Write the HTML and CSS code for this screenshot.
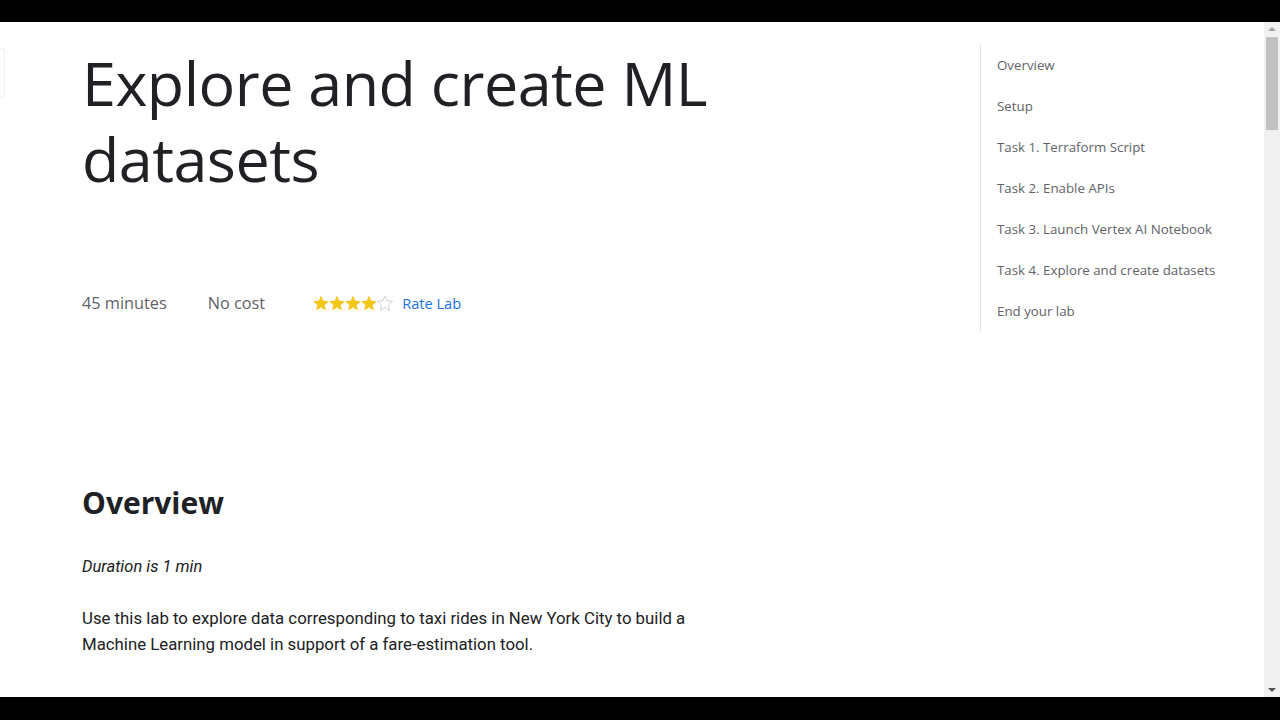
FILE: index.html
```html
<!DOCTYPE html>
<html>
<head>
<meta charset="utf-8">
<link rel="stylesheet" href="styles.css">
</head>
<body>
<div class="letterbox top"></div>
<div class="viewport">
  <div class="page">
    <div class="edge-tab"></div>
    <main class="main">
      <h1 class="title">Explore and create ML datasets</h1>
      <div class="meta">
        <span class="meta-item">45 minutes</span>
        <span class="meta-item">No cost</span>
        <span class="rating">
          <span class="stars">
            <svg class="star" viewBox="2 1.5 20 20"><path d="M12 17.27L18.18 21l-1.64-7.03L22 9.24l-7.19-.61L12 2 9.19 8.63 2 9.240l5.46 4.73L5.82 21z" fill="#f5c518"/></svg>
            <svg class="star" viewBox="2 1.5 20 20"><path d="M12 17.27L18.18 21l-1.64-7.03L22 9.24l-7.19-.61L12 2 9.19 8.63 2 9.24l5.46 4.73L5.82 21z" fill="#f5c518"/></svg>
            <svg class="star" viewBox="2 1.5 20 20"><path d="M12 17.27L18.18 21l-1.64-7.03L22 9.24l-7.19-.61L12 2 9.19 8.63 2 9.24l5.46 4.73L5.82 21z" fill="#f5c518"/></svg>
            <svg class="star" viewBox="2 1.5 20 20"><path d="M12 17.27L18.18 21l-1.64-7.03L22 9.24l-7.19-.61L12 2 9.19 8.63 2 9.24l5.46 4.73L5.82 21z" fill="#f5c518"/></svg>
            <svg class="star" viewBox="1.5 1 21 21"><path d="M12 17.27L18.18 21l-1.64-7.03L22 9.24l-7.19-.61L12 2 9.19 8.63 2 9.24l5.46 4.73L5.82 21z" fill="none" stroke="#cfcfcf" stroke-width="1.3"/></svg>
          </span>
          <a class="rate-link" href="#">Rate Lab</a>
        </span>
      </div>
      <section class="section">
        <h2 class="section-title">Overview</h2>
        <p class="duration">Duration is 1 min</p>
        <p class="body-text">Use this lab to explore data corresponding to taxi rides in New York City to build a Machine Learning model in support of a fare-estimation tool.</p>
      </section>
    </main>
    <aside class="toc">
      <ul class="toc-list">
        <li>Overview</li>
        <li>Setup</li>
        <li>Task 1. Terraform Script</li>
        <li>Task 2. Enable APIs</li>
        <li>Task 3. Launch Vertex AI Notebook</li>
        <li>Task 4. Explore and create datasets</li>
        <li>End your lab</li>
      </ul>
    </aside>
  </div>
  <div class="scrollbar">
    <div class="sb-arrow up"></div>
    <div class="sb-thumb"></div>
    <div class="sb-track"></div>
    <div class="sb-arrow down"></div>
  </div>
</div>
<div class="letterbox bottom"></div>
</body>
</html>
```

FILE: styles.css
```css
html, body {
  margin: 0;
  padding: 0;
  width: 1280px;
  height: 720px;
  overflow: hidden;
  background: #000;
}
.letterbox.top { height: 22px; background: #000; }
.letterbox.bottom { height: 23px; background: #000; }
.viewport {
  height: 675px;
  display: flex;
  background: #fff;
  overflow: hidden;
}
.page {
  flex: 1;
  display: flex;
  position: relative;
}
.edge-tab {
  position: absolute;
  left: 0;
  top: 26px;
  width: 4px;
  height: 48px;
  border: 1px solid #f1f1f1;
  border-left: none;
  border-radius: 0 3px 3px 0;
}
.main {
  width: 980px;
  flex-shrink: 0;
  box-sizing: border-box;
  padding-left: 82px;
}
.title {
  font-family: "Open Sans", sans-serif;
  font-weight: 400;
  font-size: 61px;
  line-height: 76px;
  letter-spacing: -0.5px;
  color: #202124;
  margin: 23px 0 0;
  max-width: 700px;
}
.meta {
  display: flex;
  align-items: center;
  margin-top: 95px;
  font-family: "Open Sans", sans-serif;
  font-size: 16.3px;
  color: #5f6368;
}
.meta-item { margin-right: 41px; }
.rating { display: flex; align-items: center; margin-left: 7px; }
.stars { display: flex; margin-right: 9px; }
.star { width: 16px; height: 16px; }
.rate-link {
  color: #1a73e8;
  text-decoration: none;
  font-size: 14.6px;
  font-weight: 500;
}
.section { margin-top: 169px; }
.section-title {
  font-family: "Open Sans", sans-serif;
  font-weight: 700;
  font-size: 30px;
  line-height: 40px;
  color: #202124;
  margin: 0 0 31px;
}
.duration {
  font-family: Roboto, sans-serif;
  font-style: italic;
  font-size: 16.5px;
  line-height: 26px;
  color: #202124;
  margin: 0 0 25px;
}
.body-text {
  font-family: Roboto, sans-serif;
  font-size: 16.8px;
  line-height: 26px;
  color: #202124;
  margin: 0;
  max-width: 640px;
}
.toc {
  flex: 1;
  padding-top: 23px;
}
.toc-list {
  list-style: none;
  margin: 0;
  padding: 8px 0 8px 16px;
  border-left: 1px solid #e0e0e0;
  font-family: "Open Sans", sans-serif;
  font-size: 13.3px;
  color: #5f6368;
}
.toc-list li {
  height: 41px;
  line-height: 24px;
  white-space: nowrap;
}
.toc-list li:last-child { height: 24px; }
.scrollbar {
  width: 16px;
  background: #f1f1f1;
  display: flex;
  flex-direction: column;
}
.sb-arrow { height: 15px; position: relative; }
.sb-arrow::after {
  content: "";
  position: absolute;
  left: 4px;
  border-left: 4px solid transparent;
  border-right: 4px solid transparent;
}
.sb-arrow.up::after { top: 5px; border-bottom: 4px solid #a3a3a3; }
.sb-arrow.down::after { top: 6px; border-top: 4px solid #505050; }
.sb-thumb {
  height: 93px;
  margin: 0 2px;
  background: #c1c1c1;
}
.sb-track { flex: 1; }
```
